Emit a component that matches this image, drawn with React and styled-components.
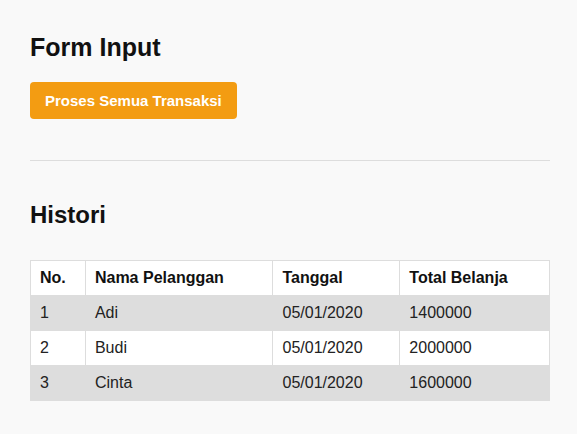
import React from 'react';
import styled, { createGlobalStyle } from 'styled-components';

const GlobalStyle = createGlobalStyle`
  body {
    margin: 0;
    background: #f9f9f9;
    font-family: "Liberation Sans", Arial, sans-serif;
    color: #222;
  }
`;

const Page = styled.div`
  padding: 33px 27px 30px 30px;
  display: flex;
  flex-direction: column;
  align-items: flex-start;
`;

const Judul = styled.h2`
  font-size: ${(p) => p.$size || 24}px;
  font-weight: bold;
  color: #111;
  margin: 0 0 ${(p) => p.$bawah}px 0;
  line-height: 28px;
`;

const Tombol = styled.button`
  background: #f39c12;
  color: #fff;
  border: none;
  border-radius: 4px;
  height: 37px;
  padding: 0 15px;
  font-family: "Liberation Sans", Arial, sans-serif;
  font-size: 15px;
  font-weight: bold;
  cursor: pointer;
`;

const Garis = styled.hr`
  align-self: stretch;
  border: none;
  border-top: 1px solid #ddd;
  margin: 41px 0 40px 0;
`;

const Tabel = styled.table`
  width: 520px;
  border-collapse: collapse;
  font-size: 16px;
`;

const Sel = styled.td`
  border: 1px solid #ddd;
  height: 35px;
  padding: 0 9px;
  box-sizing: border-box;
  width: ${(p) => p.$w}px;
  color: #222;
`;

const Judulkolom = styled(Sel).attrs({ as: 'th' })`
  text-align: left;
  font-weight: bold;
  color: #111;
`;

const Baris = styled.tr`
  background: ${(p) => (p.$abu ? '#dddddd' : '#ffffff')};
`;

const lebar = [55, 188, 127, 150];

const data = [
  ['1', 'Adi', '05/01/2020', '1400000'],
  ['2', 'Budi', '05/01/2020', '2000000'],
  ['3', 'Cinta', '05/01/2020', '1600000'],
];

export default function App() {
  return (
    <>
      <GlobalStyle />
      <Page>
        <Judul $size={25} $bawah={21}>Form Input</Judul>
        <Tombol>Proses Semua Transaksi</Tombol>
        <Garis />
        <Judul $bawah={31}>Histori</Judul>
        <Tabel>
          <thead>
            <Baris>
              {['No.', 'Nama Pelanggan', 'Tanggal', 'Total Belanja'].map((h, i) => (
                <Judulkolom key={h} $w={lebar[i]}>{h}</Judulkolom>
              ))}
            </Baris>
          </thead>
          <tbody>
            {data.map((row, r) => (
              <Baris key={row[0]} $abu={r % 2 === 0}>
                {row.map((c, i) => (
                  <Sel key={i} $w={lebar[i]}>{c}</Sel>
                ))}
              </Baris>
            ))}
          </tbody>
        </Tabel>
      </Page>
    </>
  );
}
